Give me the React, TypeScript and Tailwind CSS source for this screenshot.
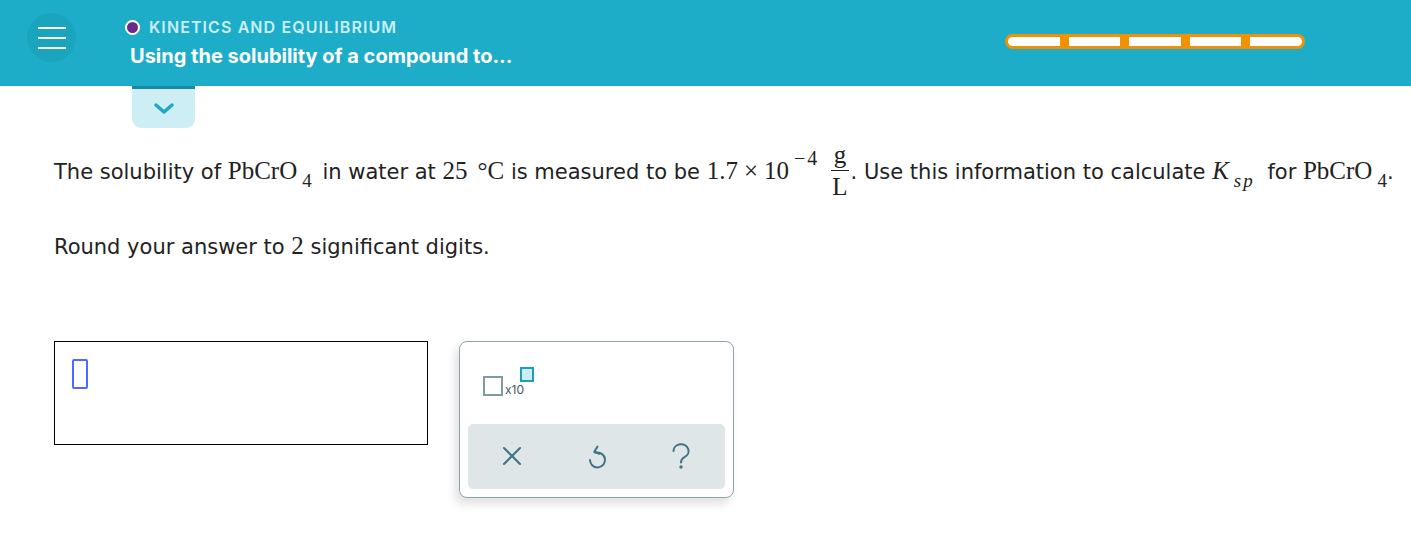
import React from "react";

const serif = "font-['Liberation_Serif','Times_New_Roman',serif]";

function Fraction({ top, bottom }: { top: string; bottom: string }) {
  return (
    <span className="ml-[12px] mr-[2px] inline-flex flex-col items-center align-middle leading-none">
      <span className={`${serif} px-[1px] pb-[3px] text-[25px]`}>{top}</span>
      <span className="h-px w-full bg-[#222]" />
      <span className={`${serif} px-[1px] pt-[3px] text-[25px]`}>{bottom}</span>
    </span>
  );
}

function Formula({ last = false }: { last?: boolean }) {
  return (
    <span className={`${serif} text-[25px]`}>
      PbCrO
      <sub className={`relative top-[8px] ml-[5px] ${last ? "mr-0" : "mr-[4px]"} text-[19px] align-baseline`}>4</sub>
    </span>
  );
}

function Header() {
  return (
    <header className="flex h-[86px] items-start bg-[#1eadc8]">
      <button className="ml-[27px] mt-[13px] flex h-[49px] w-[49px] flex-col items-center justify-center gap-[8px] rounded-full bg-[#1ba4be]">
        <span className="h-[2px] w-[28px] bg-white" />
        <span className="h-[2px] w-[28px] bg-white" />
        <span className="h-[2px] w-[28px] bg-white" />
      </button>
      <div className="ml-[54px] mt-[15px] font-['Inter',sans-serif]">
        <div className="-ml-[5px] flex items-center gap-[9px]">
          <span className="h-[15px] w-[15px] rounded-full border-2 border-white bg-[#6c2a8c]" />
          <span className="text-[16px] font-semibold tracking-[1.1px] text-[#c9eef5]">
            KINETICS AND EQUILIBRIUM
          </span>
        </div>
        <div className="mt-[2px] text-[20px] font-bold text-white">
          Using the solubility of a compound to...
        </div>
      </div>
      <div className="ml-auto mr-[106px] mt-[34px] flex h-[15px] w-[300px] gap-[9px] rounded-full bg-[#f39200] p-[3px]">
        <span className="flex-1 rounded-l-full bg-white" />
        <span className="flex-1 bg-white" />
        <span className="flex-1 bg-white" />
        <span className="flex-1 bg-white" />
        <span className="flex-1 rounded-r-full bg-white" />
      </div>
    </header>
  );
}

function XIcon() {
  return (
    <svg width="20" height="20" viewBox="0 0 20 20" fill="none" stroke="#3d7282" strokeWidth="2" strokeLinecap="round">
      <path d="M2 2 L18 18 M18 2 L2 18" />
    </svg>
  );
}

function UndoIcon() {
  return (
    <svg width="22" height="28" viewBox="0 0 22 28" fill="none" stroke="#3d7282" strokeWidth="2" strokeLinecap="round" strokeLinejoin="round">
      <path d="M4 18 A7.5 7.5 0 1 0 10 10.6" />
      <path d="M11.5 4.5 L8.2 10 L13.5 11.8" />
    </svg>
  );
}

function HelpIcon() {
  return (
    <svg width="20" height="26" viewBox="0 0 20 26" fill="none" stroke="#3d7282" strokeWidth="2" strokeLinecap="round">
      <path d="M2.5 8 A7.5 6.8 0 1 1 13.5 14 C10.8 15.5 10 16.5 10 19.5" />
      <circle cx="10" cy="24" r="0.7" fill="#3d7282" />
    </svg>
  );
}

export default function App() {
  return (
    <div className="min-h-[535px] bg-white">
      <Header />
      <div className="ml-[132px] flex h-[42px] w-[63px] items-center justify-center rounded-b-[9px] border-t-[3px] border-[#168ba3] bg-[#cdeef4]">
        <svg width="22" height="13" viewBox="0 0 22 13" fill="none" stroke="#1ea8c4" strokeWidth="3.5" strokeLinecap="round" strokeLinejoin="round">
          <path d="M3 3 L11 10 L19 3" />
        </svg>
      </div>

      <div className="pl-[54px] font-['DejaVu_Sans','Verdana',sans-serif] text-[21px] text-[#222]">
        <p className="mt-[14px] flex items-center whitespace-nowrap">
          <span>
            The solubility of <Formula /> in water at{" "}
            <span className={`${serif} text-[25px]`}>
              25<span className="ml-[10px]">°C</span>
            </span>{" "}
            is measured to be{" "}
            <span className={`${serif} text-[25px]`}>
              1.7<span className="mx-[6px]">×</span>10
              <sup className="relative -top-[4px] ml-[5px] text-[20px] tracking-[2px] align-super">−4</sup>
            </span>
          </span>
          <Fraction top="g" bottom="L" />
          <span>
            . Use this information to calculate{" "}
            <span className={`${serif} text-[25px] italic`}>
              K<sub className="relative top-[8px] ml-[5px] mr-[6px] text-[19px] tracking-[2px] align-baseline">sp</sub>
            </span>{" "}
            for <Formula last />.
          </span>
        </p>

        <p className="mt-[28px]">
          Round your answer to <span className={`${serif} text-[25px]`}>2</span> significant digits.
        </p>

        <div className="mt-[76px] flex items-start gap-[31px]">
          <div className="h-[104px] w-[374px] border border-black pl-[17px] pt-[17px]">
            <div className="h-[30px] w-[16px] rounded-[2px] border-2 border-[#4a6cff]" />
          </div>
          <div className="flex h-[157px] w-[275px] flex-col rounded-[8px] border border-[#8aa5ab] bg-white px-[8px] pb-[8px] shadow-[-4px_6px_10px_rgba(0,0,0,0.12)]">
            <div className="flex h-[82px] items-start pl-[15px] pt-[25px]">
              <div className="mt-[9px] h-[20px] w-[20px] border-2 border-[#7f9ba1]" />
              <span className="mt-[14px] ml-[2px] font-['Inter',sans-serif] text-[12px] text-[#3d5a60]">x10</span>
              <div className="ml-[-4px] h-[15px] w-[14px] border-2 border-[#1e9fb7] bg-[#c9eef4]" />
            </div>
            <div className="flex flex-1 items-center justify-between rounded-[5px] bg-[#dfe6e8] px-[34px]">
              <XIcon />
              <UndoIcon />
              <HelpIcon />
            </div>
          </div>
        </div>
      </div>
    </div>
  );
}
